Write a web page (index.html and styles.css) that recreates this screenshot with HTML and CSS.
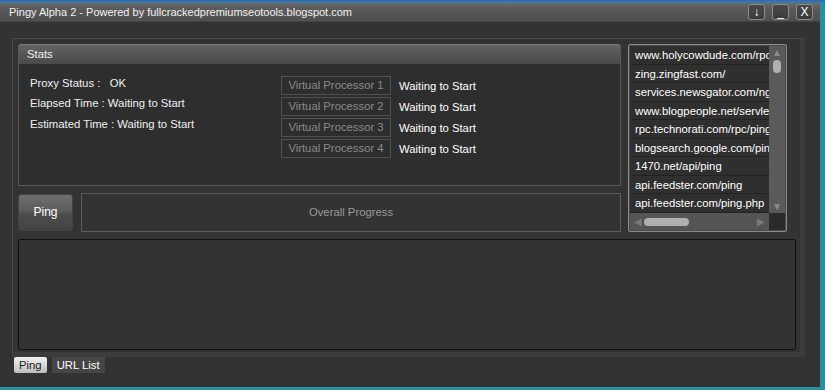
FILE: index.html
```html
<!DOCTYPE html>
<html>
<head>
<meta charset="utf-8">
<link rel="stylesheet" href="styles.css">
</head>
<body>
<div class="window">
  <div class="titlebar">
    <span class="title">Pingy Alpha 2 - Powered by fullcrackedpremiumseotools.blogspot.com</span>
    <div class="ctrls">
      <span class="cbtn">&#8595;</span>
      <span class="cbtn">_</span>
      <span class="cbtn">X</span>
    </div>
  </div>
  <div class="main">
    <div class="page">
      <div class="top">
        <div class="leftcol">
          <div class="stats">
            <div class="stats-head">Stats</div>
            <div class="stats-body">
              <div class="info">
                <div class="line">Proxy Status :&nbsp;&nbsp; OK</div>
                <div class="line">Elapsed Time : Waiting to Start</div>
                <div class="line l3">Estimated Time : Waiting to Start</div>
              </div>
              <div class="procs">
                <div class="proc"><span class="pbox">Virtual Processor 1</span><span class="pstate">Waiting to Start</span></div>
                <div class="proc"><span class="pbox">Virtual Processor 2</span><span class="pstate">Waiting to Start</span></div>
                <div class="proc"><span class="pbox">Virtual Processor 3</span><span class="pstate">Waiting to Start</span></div>
                <div class="proc"><span class="pbox">Virtual Processor 4</span><span class="pstate">Waiting to Start</span></div>
              </div>
            </div>
          </div>
          <div class="pingrow">
            <div class="pingbtn">Ping</div>
            <div class="progress">Overall Progress</div>
          </div>
        </div>
        <div class="urllist">
          <div class="urlgrid">
            <div class="items">
              <div class="item">www.holycowdude.com/rpc/ping</div>
              <div class="item">zing.zingfast.com/</div>
              <div class="item">services.newsgator.com/ngws/xmlrpcping.aspx</div>
              <div class="item">www.blogpeople.net/servlet/weblogUpdates</div>
              <div class="item">rpc.technorati.com/rpc/ping</div>
              <div class="item">blogsearch.google.com/ping/RPC2</div>
              <div class="item">1470.net/api/ping</div>
              <div class="item">api.feedster.com/ping</div>
              <div class="item">api.feedster.com/ping.php</div>
            </div>
            <div class="vscroll">
              <span class="arr">&#9650;</span>
              <span class="vthumb"></span>
              <span class="vspace"></span>
              <span class="arr">&#9660;</span>
            </div>
            <div class="hscroll">
              <span class="arr">&#9664;</span>
              <span class="hthumb"></span>
              <span class="hspace"></span>
              <span class="arr">&#9654;</span>
            </div>
            <div class="corner"></div>
          </div>
        </div>
      </div>
      <div class="log"></div>
    </div>
    <div class="tabs">
      <span class="tab active">Ping</span>
      <span class="tab">URL List</span>
    </div>
  </div>
</div>
</body>
</html>
```

FILE: styles.css
```css
* { box-sizing: border-box; }
html, body { margin: 0; padding: 0; }
body {
  width: 825px;
  height: 390px;
  overflow: hidden;
  background: linear-gradient(to bottom, #2e6aa3 0, #3b7fb8 3px, #2f8d9d 3px, #2f8d9d 100%);
  font-family: "Liberation Sans", Arial, sans-serif;
  font-size: 11.3px;
  color: #fff;
}
.window {
  width: 820px;
  height: 384px;
  margin-top: 3px;
  background: #333;
  display: flex;
  flex-direction: column;
}
.titlebar {
  height: 19px;
  background: linear-gradient(to bottom, #6a6a6a, #575757 40%, #4f4f4f);
  display: flex;
  align-items: center;
  justify-content: space-between;
  padding: 0 7px 0 9px;
  border-bottom: 1px solid #444;
}
.title { font-size: 11px; color: #f2f2f2; }
.ctrls { display: flex; gap: 7px; }
.cbtn {
  width: 17px;
  height: 16px;
  border: 1px solid #8c8c8c;
  border-radius: 3px;
  background: linear-gradient(to bottom, #4a4a4a, #3a3a3a);
  color: #fff;
  font-size: 12px;
  line-height: 14px;
  text-align: center;
}
.main {
  flex: 1;
  padding: 16px 0 0 12px;
  display: flex;
  flex-direction: column;
}
.page {
  width: 793px;
  height: 319px;
  border-top: 1px solid #4a4a4a;
  border-left: 1px solid #4a4a4a;
  border-right: 5px solid #3c3c3c;
  border-bottom: 5px solid #3c3c3c;
  background: #333;
  padding: 5px 0 0 5px;
  display: flex;
  flex-direction: column;
  gap: 7px;
}
.top { display: flex; gap: 7px; height: 188px; }
.leftcol { width: 603px; display: flex; flex-direction: column; gap: 7px; }
.stats {
  height: 142px;
  border: 1px solid #5a5a5a;
  border-top-color: #7a7a7a;
  border-radius: 3px 3px 0 0;
  background: #2e2e2e;
  display: flex;
  flex-direction: column;
}
.stats-head {
  height: 19px;
  background: linear-gradient(to bottom, #656565, #555 50%, #4a4a4a);
  padding-left: 8px;
  line-height: 18px;
  color: #f0f0f0;
}
.stats-body { flex: 1; display: flex; }
.info { width: 262px; padding: 9px 0 0 11px; }
.line { height: 20px; line-height: 20px; color: #f0f0f0; }
.line.l3 { margin-top: 1px; }
.procs { padding-top: 12px; display: flex; flex-direction: column; gap: 2px; }
.proc { display: flex; align-items: center; gap: 8px; height: 19px; }
.pbox {
  width: 110px;
  height: 19px;
  border: 1px solid #505050;
  color: #8a8a8a;
  text-align: center;
  line-height: 17px;
}
.pstate { color: #fff; }
.pingrow { display: flex; gap: 8px; height: 39px; align-items: center; }
.pingbtn {
  width: 55px;
  height: 37px;
  border-radius: 3px;
  border: 1px solid #444;
  background: linear-gradient(to bottom, #6e6e6e, #5c5c5c 45%, #4c4c4c 55%, #444);
  color: #fff;
  font-size: 12px;
  text-align: center;
  line-height: 35px;
}
.progress {
  flex: 1;
  height: 39px;
  border: 1px solid #5c5c5c;
  color: #9a9a9a;
  text-align: center;
  line-height: 37px;
}
.urllist {
  width: 159px;
  height: 188px;
  border: 1px solid #8a8a8a;
  border-radius: 2px;
  background: #4a4a4a;
  padding: 1px;
}
.urlgrid {
  display: grid;
  grid-template-columns: 139px 16px;
  grid-template-rows: 167px 17px;
  height: 100%;
}
.items { overflow: hidden; background: #2a2a2a; }
.item {
  height: 18.5px;
  line-height: 18px;
  padding-left: 5px;
  background: #2f2f2f;
  border-bottom: 1px solid #222;
  white-space: nowrap;
  overflow: hidden;
  color: #fff;
}
.vscroll {
  background: #5a5a5a;
  display: flex;
  flex-direction: column;
  align-items: center;
}
.vscroll .arr { color: #8c8c8c; font-size: 10px; line-height: 13px; height: 13px; }
.vthumb { width: 8px; height: 13px; border-radius: 4px; background: #b0b0b0; margin-top: 1px; }
.vspace { flex: 1; }
.hscroll {
  background: #555;
  display: flex;
  align-items: center;
  padding: 0 2px;
}
.hscroll .arr { color: #7a7a7a; font-size: 10px; width: 12px; text-align: center; }
.hthumb { width: 45px; height: 8px; border-radius: 4px; background: #b0b0b0; }
.hspace { flex: 1; }
.corner { background: #2a2a2a; }
.log {
  width: 778px;
  height: 111px;
  border: 1px solid #111;
  border-radius: 2px;
  background: #333;
}
.tabs { display: flex; gap: 5px; padding-left: 2px; }
.tab {
  height: 16px;
  line-height: 16px;
  padding: 0 5px;
  background: #454545;
  color: #fff;
}
.tab.active {
  background: linear-gradient(to bottom, #f2f2f2, #d8d8d8 50%, #bcbcbc);
  color: #222;
  border-radius: 2px;
}
```
